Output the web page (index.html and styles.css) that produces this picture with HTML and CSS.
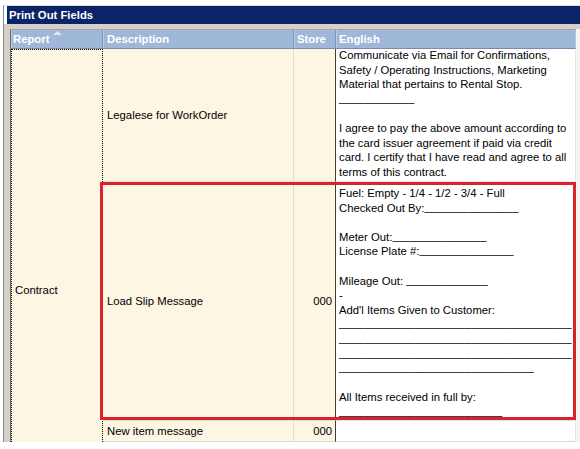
FILE: index.html
```html
<!DOCTYPE html>
<html>
<head>
<meta charset="utf-8">
<link rel="stylesheet" href="styles.css">
</head>
<body>
<div class="frame">
  <div class="titlebar">Print Out Fields</div>
  <div class="gridwrap">
    <table class="grid">
      <colgroup>
        <col class="c-report">
        <col class="c-desc">
        <col class="c-store">
        <col class="c-eng">
      </colgroup>
      <thead>
        <tr>
          <th class="h-report">Report<svg class="sort" width="9" height="4" viewBox="0 0 9 4"><polygon points="0,4 4.5,0 9,4" fill="#e2e8f1"/></svg></th>
          <th class="h-desc">Description</th>
          <th class="h-store">Store</th>
          <th class="h-eng">English</th>
        </tr>
      </thead>
      <tbody>
        <tr>
          <td class="report" rowspan="3">Contract</td>
          <td class="desc">Legalese for WorkOrder</td>
          <td class="store"></td>
          <td class="eng"><div class="memo memo1"><div class="lines lift">Communicate via Email for Confirmations,<br>Safety / Operating Instructions, Marketing<br>Material that pertains to Rental Stop.<br><span class="rule">____________</span><br><br>I agree to pay the above amount according to<br>the card issuer agreement if paid via credit<br>card. I certify that I have read and agree to all<br>terms of this contract.</div></div></td>
        </tr>
        <tr>
          <td class="desc">Load Slip Message</td>
          <td class="store">000</td>
          <td class="eng"><div class="memo memo2"><div class="lines">Fuel: Empty - 1/4 - 1/2 - 3/4 - Full<br>Checked Out By:<span class="rule">_______________</span><br><br>Meter Out:<span class="rule">_______________</span><br>License Plate #:<span class="rule">_______________</span><br><br>Mileage Out: <span class="rule">_____________</span><br>-<br>Add'l Items Given to Customer:<br><span class="rule">_____________________________________</span><br><span class="rule">_____________________________________</span><br><span class="rule">_____________________________________</span><br><span class="rule">_______________________________</span><br><br>All Items received in full by:<br><span class="rule">__________________________</span></div></div></td>
        </tr>
        <tr class="last">
          <td class="desc">New item message</td>
          <td class="store">000</td>
          <td class="eng"><div class="memo memo3"></div></td>
        </tr>
      </tbody>
    </table>
    <div class="highlight"></div>
  </div>
</div>
</body>
</html>
```
FILE: styles.css
```css
html, body {
  margin: 0;
  padding: 0;
  background: #ffffff;
}

body {
  font-family: "Liberation Sans", Arial, sans-serif;
  font-size: 11.3px;
  color: #000000;
}

.frame {
  margin: 5px 0 0 3px;
  border-top: 1px solid #e2e2e2;
  border-left: 1px solid #8a8a8a;
  width: 576px;
}

.titlebar {
  margin-left: 3px;
  height: 18px;
  line-height: 18px;
  padding-left: 2px;
  background: #0b2467;
  color: #ffffff;
  font-weight: bold;
}

.gridwrap {
  position: relative;
  border-top: 5px solid #d6d0cc;
  border-left: 6px solid #d4d0c8;
  background: #f4f4f4;
}

.grid {
  border-collapse: separate;
  border-spacing: 0;
  table-layout: fixed;
  width: 566px;
  border-left: 1px solid #6a6a6a;
  border-top: 1px solid #a8a2a0;
  line-height: 14.6px;
}

.c-report { width: 92px; }
.c-desc { width: 191px; }
.c-store { width: 42px; }
.c-eng { width: 240px; }

th {
  position: relative;
  height: 18px;
  padding: 0 0 0 3px;
  line-height: 18px;
  text-align: left;
  background: #9fb7d8;
  color: #ffffff;
  font-weight: bold;
  border-right: 1px solid #7f95b6;
  border-bottom: 1px solid #7d8ca6;
  box-shadow: inset 1px 0 0 #b9cbe4;
  white-space: nowrap;
  overflow: hidden;
}

th.h-report {
  padding-left: 2px;
  overflow: visible;
}

th.h-desc {
  padding-left: 4px;
}

th.h-eng {
  border-right-color: #b8c6da;
}

.sort {
  position: absolute;
  left: 42px;
  top: 1px;
}

td {
  padding: 0;
  vertical-align: middle;
  white-space: nowrap;
}

td.report {
  vertical-align: top;
  padding: 233px 0 0 3px;
  background: #fdf6e3;
  border-left: 1px dotted #000000;
  border-right: 1px dotted #000000;
  border-top: 1px dotted #000000;
}

td.desc {
  padding-left: 4px;
  background: #fdf6e3;
  border-right: 1px solid #e2dccb;
  border-bottom: 1px solid #e2dccb;
}

td.store {
  padding-right: 3px;
  text-align: right;
  background: #fdf6e3;
  border-right: 1px solid #3c3c3c;
  border-bottom: 1px solid #e2dccb;
}

td.eng {
  vertical-align: top;
  background: #ffffff;
  border-right: 1px solid #e4e4e4;
  border-bottom: 1px solid #e4e4e4;
}

tr.last td.desc,
tr.last td.store,
tr.last td.eng {
  border-bottom-color: #d9d9d9;
}

.memo {
  box-sizing: border-box;
  overflow: hidden;
  padding-left: 3px;
}

.memo1 {
  height: 132px;
}

.memo2 {
  height: 238px;
  padding-top: 4px;
}

.memo3 {
  height: 20px;
}

.lift {
  margin-top: -1px;
}

.rule {
  line-height: 10px;
  vertical-align: 1px;
}

.highlight {
  position: absolute;
  left: 90px;
  top: 153px;
  width: 476px;
  height: 238px;
  box-sizing: border-box;
  border: 3px solid #d8232f;
  pointer-events: none;
}
```
